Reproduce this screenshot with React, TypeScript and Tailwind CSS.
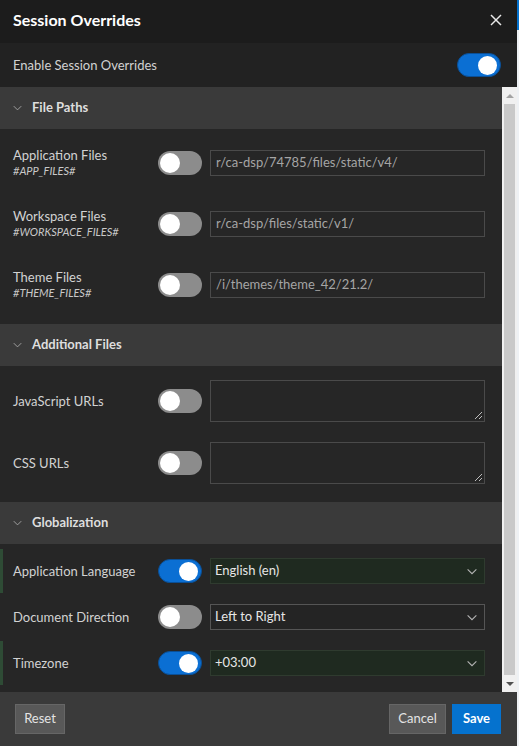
import type { ReactNode } from "react";

type ToggleProps = { on?: boolean };

function Toggle({ on = false }: ToggleProps) {
  return (
    <div
      className={
        on
          ? "relative h-[24px] w-[44px] shrink-0 rounded-full border border-[#0a4f96] bg-[#0b6fd3]"
          : "relative h-[24px] w-[44px] shrink-0 rounded-full bg-[#8c8c8c]"
      }
    >
      <div
        className={
          on
            ? "absolute right-[3px] top-[2px] h-[19px] w-[19px] rounded-full bg-white"
            : "absolute left-[2px] top-[2px] h-[20px] w-[20px] rounded-full bg-white"
        }
      />
    </div>
  );
}

function Chevron({ className }: { className: string }) {
  return (
    <svg viewBox="0 0 12 8" className={className} fill="none" stroke="currentColor" strokeWidth="1.2">
      <polyline points="1,1.5 6,6.5 11,1.5" />
    </svg>
  );
}

function SectionHeader({ title }: { title: string }) {
  return (
    <div className="flex h-[42px] items-center gap-[10px] bg-[#3a3a3a] pl-[13px]">
      <Chevron className="h-[6px] w-[9px] text-[#a9a9a9]" />
      <span className="text-[13px] font-bold text-[#dedede]">{title}</span>
    </div>
  );
}

function Field({
  label,
  sub,
  on,
  height,
  children,
  changed,
}: {
  label: string;
  sub?: string;
  on?: boolean;
  height: string;
  children: ReactNode;
  changed?: boolean;
}) {
  return (
    <div className={`flex items-center ${height}`}>
      <div
        className={
          changed
            ? "flex h-full w-[158px] shrink-0 flex-col justify-center border-l-[3px] border-[#2e4b35] pl-[10px]"
            : "flex h-full w-[158px] shrink-0 flex-col justify-center pl-[13px]"
        }
      >
        <span className="text-[13px] leading-[16px] text-[#d2d2d2]">{label}</span>
        {sub && <span className="text-[11px] italic leading-[15px] text-[#c9c9c9]">{sub}</span>}
      </div>
      <Toggle on={on} />
      <div className="ml-[8px] w-[275px]">{children}</div>
    </div>
  );
}

function TextInput({ value }: { value: string }) {
  return (
    <div className="flex h-[26px] items-center border border-[#4a4a4a] pl-[5px] text-[13px] text-[#a5a5a5]">
      {value}
    </div>
  );
}

function TextArea() {
  return (
    <div className="relative h-[42px] border border-[#4a4a4a]">
      <svg viewBox="0 0 8 8" className="absolute bottom-[2px] right-[2px] h-[8px] w-[8px]" stroke="#bdbdbd" strokeWidth="1">
        <line x1="1" y1="8" x2="8" y2="1" />
        <line x1="5" y1="8" x2="8" y2="5" />
      </svg>
    </div>
  );
}

function Select({ value, changed }: { value: string; changed?: boolean }) {
  return (
    <div
      className={
        changed
          ? "flex h-[26px] items-center justify-between border border-[#2f3b2f] bg-[#1f2a20] pl-[4px] pr-[6px] text-[13px] text-[#e6e6e6]"
          : "flex h-[26px] items-center justify-between border border-[#555555] bg-[#242424] pl-[4px] pr-[6px] text-[13px] text-[#e6e6e6]"
      }
    >
      <span>{value}</span>
      <Chevron className="h-[7px] w-[12px] text-[#b5b5b5]" />
    </div>
  );
}

function Scrollbar() {
  return (
    <div className="flex w-[15px] shrink-0 flex-col bg-[#f0f0f0]">
      <div className="flex h-[17px] items-center justify-center">
        <div className="h-0 w-0 border-x-[4px] border-b-[4px] border-x-transparent border-b-[#a3a3a3]" />
      </div>
      <div className="mx-[2px] flex-1 bg-[#c9c9c9]" />
      <div className="flex h-[17px] items-center justify-center">
        <div className="h-0 w-0 border-x-[4px] border-t-[4px] border-x-transparent border-t-[#505050]" />
      </div>
    </div>
  );
}

export default function App() {
  return (
    <div
      className="flex h-[746px] w-[519px] overflow-hidden bg-[#eef1f4]"
      style={{ fontFamily: "Lato, 'Noto Sans', sans-serif" }}
    >
      <div className="flex h-full w-[517px] shrink-0 flex-col bg-[#262626]">
        <div className="flex h-[43px] shrink-0 items-center justify-between bg-[#1c1c1c] pb-[4px] pl-[13px] pr-[15px]">
          <h1 className="text-[16px] font-bold text-white">Session Overrides</h1>
          <svg viewBox="0 0 12 12" className="h-[12px] w-[12px]" stroke="#e8e8e8" strokeWidth="1.5">
            <line x1="1" y1="1" x2="11" y2="11" />
            <line x1="11" y1="1" x2="1" y2="11" />
          </svg>
        </div>

        <div className="flex h-[44px] shrink-0 items-center justify-between bg-[#222222] pl-[13px] pr-[16px]">
          <span className="pt-[2px] text-[13px] text-[#d2d2d2]">Enable Session Overrides</span>
          <Toggle on />
        </div>

        <div className="flex min-h-0 flex-1">
          <div className="flex min-w-0 flex-1 flex-col overflow-hidden">
            <SectionHeader title="File Paths" />
            <div className="pb-[9px] pt-[3px]">
              <Field label="Application Files" sub="#APP_FILES#" height="h-[61px]">
                <TextInput value="r/ca-dsp/74785/files/static/v4/" />
              </Field>
              <Field label="Workspace Files" sub="#WORKSPACE_FILES#" height="h-[61px]">
                <TextInput value="r/ca-dsp/files/static/v1/" />
              </Field>
              <Field label="Theme Files" sub="#THEME_FILES#" height="h-[61px]">
                <TextInput value="/i/themes/theme_42/21.2/" />
              </Field>
            </div>

            <SectionHeader title="Additional Files" />
            <div className="pb-[8px] pt-[4px]">
              <Field label="JavaScript URLs" height="h-[62px]">
                <TextArea />
              </Field>
              <Field label="CSS URLs" height="h-[62px]">
                <TextArea />
              </Field>
            </div>

            <SectionHeader title="Globalization" />
            <div className="pb-[6px] pt-[4px]">
              <div className="py-[1px]">
                <Field label="Application Language" on changed height="h-[44px]">
                  <Select value="English (en)" changed />
                </Field>
              </div>
              <div className="py-[1px]">
                <Field label="Document Direction" height="h-[44px]">
                  <Select value="Left to Right" />
                </Field>
              </div>
              <div className="py-[1px]">
                <Field label="Timezone" on changed height="h-[44px]">
                  <Select value="+03:00" changed />
                </Field>
              </div>
            </div>
          </div>
          <Scrollbar />
        </div>

        <div className="flex h-[54px] shrink-0 items-center justify-between bg-[#3a3a3a] pl-[15px] pr-[16px]">
          <button className="h-[30px] w-[50px] border border-[#666666] bg-[#585858] text-[13px] text-[#e4e4e4]">
            Reset
          </button>
          <div className="flex gap-[6px]">
            <button className="h-[30px] w-[57px] border border-[#666666] bg-[#585858] text-[13px] text-[#e4e4e4]">
              Cancel
            </button>
            <button className="h-[30px] w-[49px] bg-[#0572ce] text-[13px] font-bold text-white">Save</button>
          </div>
        </div>
      </div>
      <div className="flex flex-1 flex-col">
        <div className="h-[30px] bg-[#0572ce]" />
      </div>
    </div>
  );
}
